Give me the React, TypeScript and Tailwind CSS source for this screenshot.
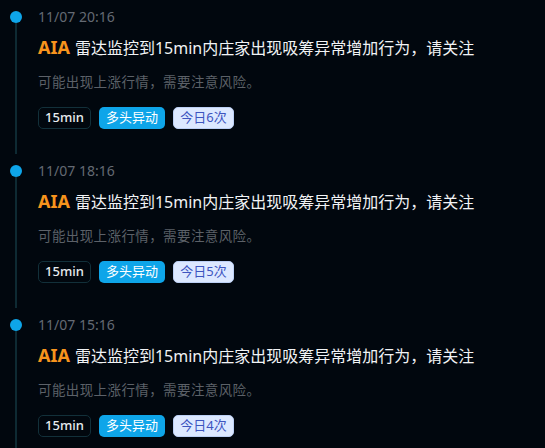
const items = [
  { time: '11/07 20:16', count: 6 },
  { time: '11/07 18:16', count: 5 },
  { time: '11/07 15:16', count: 4 },
]

const font = { fontFamily: '"Noto Sans", "Noto Sans CJK SC", sans-serif' }

function Item({ time, count }: { time: string; count: number }) {
  return (
    <div className="flex">
      <div className="flex w-[32px] shrink-0 flex-col items-center">
        <div className="mt-[11px] h-[12px] w-[12px] rounded-full bg-[#0ea5e9]" />
        <div className="w-[2px] flex-1 bg-[#0e2a33]" />
      </div>
      <div className="pl-[6px] pb-[25px]">
        <div className="pt-[7px] text-[14px] leading-[20px] text-[#646a73]">{time}</div>
        <div className="mt-[8px] flex items-baseline leading-[24px]">
          <span className="mr-[5px] text-[18px] font-bold text-[#f7941d]">AIA</span>
          <span className="text-[16px] text-[#f1f3f5]">雷达监控到15min内庄家出现吸筹异常增加行为，请关注</span>
        </div>
        <div className="mt-[12px] text-[13.5px] leading-[20px] tracking-[0.4px] text-[#5c6168]">可能出现上涨行情，需要注意风险。</div>
        <div className="mt-[15px] flex gap-[8px] text-[13px]">
          <span className="flex h-[22px] w-[53px] items-center justify-center rounded-[5px] border border-[#12303a] font-medium text-[#e8ecef]">
            15min
          </span>
          <span className="flex h-[22px] w-[66px] items-center justify-center rounded-[5px] bg-[#0ea5e9] text-white">
            多头异动
          </span>
          <span className="flex h-[22px] w-[61px] items-center justify-center rounded-[5px] border border-[#bcd0f5] bg-[#dce8ff] text-[#3d55c0]">
            今日{count}次
          </span>
        </div>
      </div>
    </div>
  )
}

export default function App() {
  return (
    <div className="h-[448px] w-[545px] overflow-hidden bg-[#01070e]" style={font}>
      {items.map((it) => (
        <Item key={it.time} time={it.time} count={it.count} />
      ))}
    </div>
  )
}
